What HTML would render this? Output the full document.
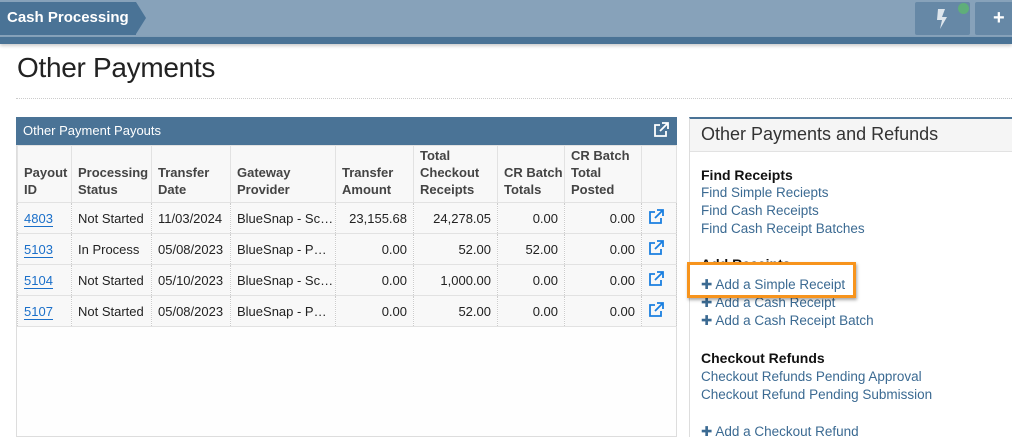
<!DOCTYPE html>
<html><head><meta charset="utf-8"><style>
*{box-sizing:border-box;margin:0;padding:0}
body{width:1012px;height:427px;overflow:hidden;background:#fff;font-family:"Liberation Sans",sans-serif;font-size:13px;color:#222;position:relative}
.abs{position:absolute}
.nav{left:0;top:0;width:1012px;height:37px;background:#87a2ba}
.band{left:0;top:37px;width:1012px;height:7px;background:#4a7396;box-shadow:0 2px 3px rgba(0,0,0,.2)}
.crumb{left:0;top:2px;height:33px;width:136px;background:#4a7396;color:#fff;font-weight:bold;font-size:15px;line-height:31px;padding-left:7px}
.arrow{left:136px;top:2px;width:0;height:0;border-top:16.5px solid transparent;border-bottom:16.5px solid transparent;border-left:10px solid #4a7396}
.btn{top:2px;height:33px;background:#6688a6;border-radius:2px}
h1{position:absolute;left:17px;top:52px;font-size:28px;font-weight:normal;color:#222;letter-spacing:-.3px}
.hr{left:16px;top:98px;width:996px;border-top:1px dotted #ccc}
.panel{left:16px;top:117px;width:661px;height:320px;border:1px solid #ddd;background:#fefefe}
.ph{left:16px;top:117px;width:661px;height:28px;background:#4a7396;color:#fff;font-size:13px;line-height:27px;padding-left:7px}
table{position:absolute;left:17px;top:145px;border-collapse:collapse;width:659px;table-layout:fixed}
td,th{border:1px dotted #ccc;background:#f8f8f8;padding:0 6px;font-size:13px;white-space:nowrap;overflow:hidden}
th{text-align:left;font-weight:bold;color:#444;height:57px;vertical-align:bottom;padding-bottom:4px;line-height:17px;border:1px solid #e2e2e2}
td{height:31px;border-top:1px solid #e2e2e2;border-bottom:1px solid #e2e2e2}
td.n{text-align:right}
a{color:#1a6fc9;text-decoration:none}
td a.id{border-bottom:1.5px solid #1a6fc9}
.rp{left:689px;top:117px;width:330px;height:320px;border-left:1px solid #ddd;border-top:2px solid #4a7396}
.rh{left:690px;top:119px;width:322px;height:33px;background:#f5f5f5;border-bottom:1px solid #e2e2e2;font-size:18px;line-height:31px;padding-left:11px;color:#333}
.l{left:701px;font-size:13.5px;line-height:18px;color:#3b6a92}
.b{color:#111;font-weight:bold;font-size:14px}
.ob{left:687px;top:262px;width:169px;height:36px;border:3px solid #f7941d;box-shadow:1px 2px 3px rgba(0,0,0,.35)}
</style></head><body>
<div class="abs nav"></div>
<div class="abs band"></div>
<div class="abs crumb">Cash Processing</div>
<div class="abs arrow"></div>
<div class="abs btn" style="left:915px;width:55px"></div>
<div class="abs btn" style="left:975px;width:40px"></div>
<svg class="abs" style="left:932px;top:7px" width="20" height="24" viewBox="0 0 20 24"><path d="M6 2h7l-3 8h5l-7 12 2-9H5z" fill="#dde5ec"/></svg>
<div class="abs" style="left:958px;top:3px;width:11px;height:11px;border-radius:50%;background:#5fae7a"></div>
<div class="abs" style="left:993px;top:10px;color:#fff;font-size:20px;font-weight:bold;line-height:16px">+</div>
<h1>Other Payments</h1>
<div class="abs hr"></div>
<div class="abs panel"></div>
<div class="abs ph">Other Payment Payouts</div>
<svg class="abs" style="left:653px;top:122px" width="16" height="16" viewBox="0 0 16 16"><path d="M7 3H2v11h11V9" fill="none" stroke="#fff" stroke-width="1.8"/><path d="M9 1h6v6M15 1L7 9" fill="none" stroke="#fff" stroke-width="1.8"/></svg>
<table>
<colgroup><col style="width:54px"><col style="width:80px"><col style="width:79px"><col style="width:105px"><col style="width:78px"><col style="width:84px"><col style="width:67px"><col style="width:77px"><col style="width:35px"></colgroup>
<tr><th>Payout<br>ID</th><th>Processing<br>Status</th><th>Transfer<br>Date</th><th>Gateway<br>Provider</th><th>Transfer<br>Amount</th><th>Total<br>Checkout<br>Receipts</th><th>CR Batch<br>Totals</th><th>CR Batch<br>Total<br>Posted</th><th></th></tr>
<tr><td><a class="id">4803</a></td><td>Not Started</td><td>11/03/2024</td><td>BlueSnap - Sc…</td><td class="n">23,155.68</td><td class="n">24,278.05</td><td class="n">0.00</td><td class="n">0.00</td><td><svg width="16" height="16" viewBox="0 0 16 16"><path d="M7 3H2v11h11V9" fill="none" stroke="#1a7fe0" stroke-width="1.8"/><path d="M9 1h6v6M15 1L7 9" fill="none" stroke="#1a7fe0" stroke-width="1.8"/></svg></td></tr>
<tr><td><a class="id">5103</a></td><td>In Process</td><td>05/08/2023</td><td>BlueSnap - P…</td><td class="n">0.00</td><td class="n">52.00</td><td class="n">52.00</td><td class="n">0.00</td><td><svg width="16" height="16" viewBox="0 0 16 16"><path d="M7 3H2v11h11V9" fill="none" stroke="#1a7fe0" stroke-width="1.8"/><path d="M9 1h6v6M15 1L7 9" fill="none" stroke="#1a7fe0" stroke-width="1.8"/></svg></td></tr>
<tr><td><a class="id">5104</a></td><td>Not Started</td><td>05/10/2023</td><td>BlueSnap - Sc…</td><td class="n">0.00</td><td class="n">1,000.00</td><td class="n">0.00</td><td class="n">0.00</td><td><svg width="16" height="16" viewBox="0 0 16 16"><path d="M7 3H2v11h11V9" fill="none" stroke="#1a7fe0" stroke-width="1.8"/><path d="M9 1h6v6M15 1L7 9" fill="none" stroke="#1a7fe0" stroke-width="1.8"/></svg></td></tr>
<tr><td><a class="id">5107</a></td><td>Not Started</td><td>05/08/2023</td><td>BlueSnap - P…</td><td class="n">0.00</td><td class="n">52.00</td><td class="n">0.00</td><td class="n">0.00</td><td><svg width="16" height="16" viewBox="0 0 16 16"><path d="M7 3H2v11h11V9" fill="none" stroke="#1a7fe0" stroke-width="1.8"/><path d="M9 1h6v6M15 1L7 9" fill="none" stroke="#1a7fe0" stroke-width="1.8"/></svg></td></tr>
</table>
<div class="abs rp"></div>
<div class="abs rh">Other Payments and Refunds</div>
<div class="abs l b" style="top:166px">Find Receipts</div>
<div class="abs l" style="top:184px">Find Simple Reciepts</div>
<div class="abs l" style="top:202px">Find Cash Receipts</div>
<div class="abs l" style="top:220px">Find Cash Receipt Batches</div>
<div class="abs l b" style="top:255px">Add Receipts</div>
<div class="abs l" style="top:294px">✚ Add a Cash Receipt</div>
<div class="abs l" style="top:312px">✚ Add a Cash Receipt Batch</div>
<div class="abs" style="left:690px;top:265px;width:163px;height:30px;background:#fff"></div>
<div class="abs l" style="top:276px">✚ Add a Simple Receipt</div>
<div class="abs ob"></div>
<div class="abs l b" style="top:349px">Checkout Refunds</div>
<div class="abs l" style="top:368px">Checkout Refunds Pending Approval</div>
<div class="abs l" style="top:386px">Checkout Refund Pending Submission</div>
<div class="abs l" style="top:423px">✚ Add a Checkout Refund</div>
</body></html>
